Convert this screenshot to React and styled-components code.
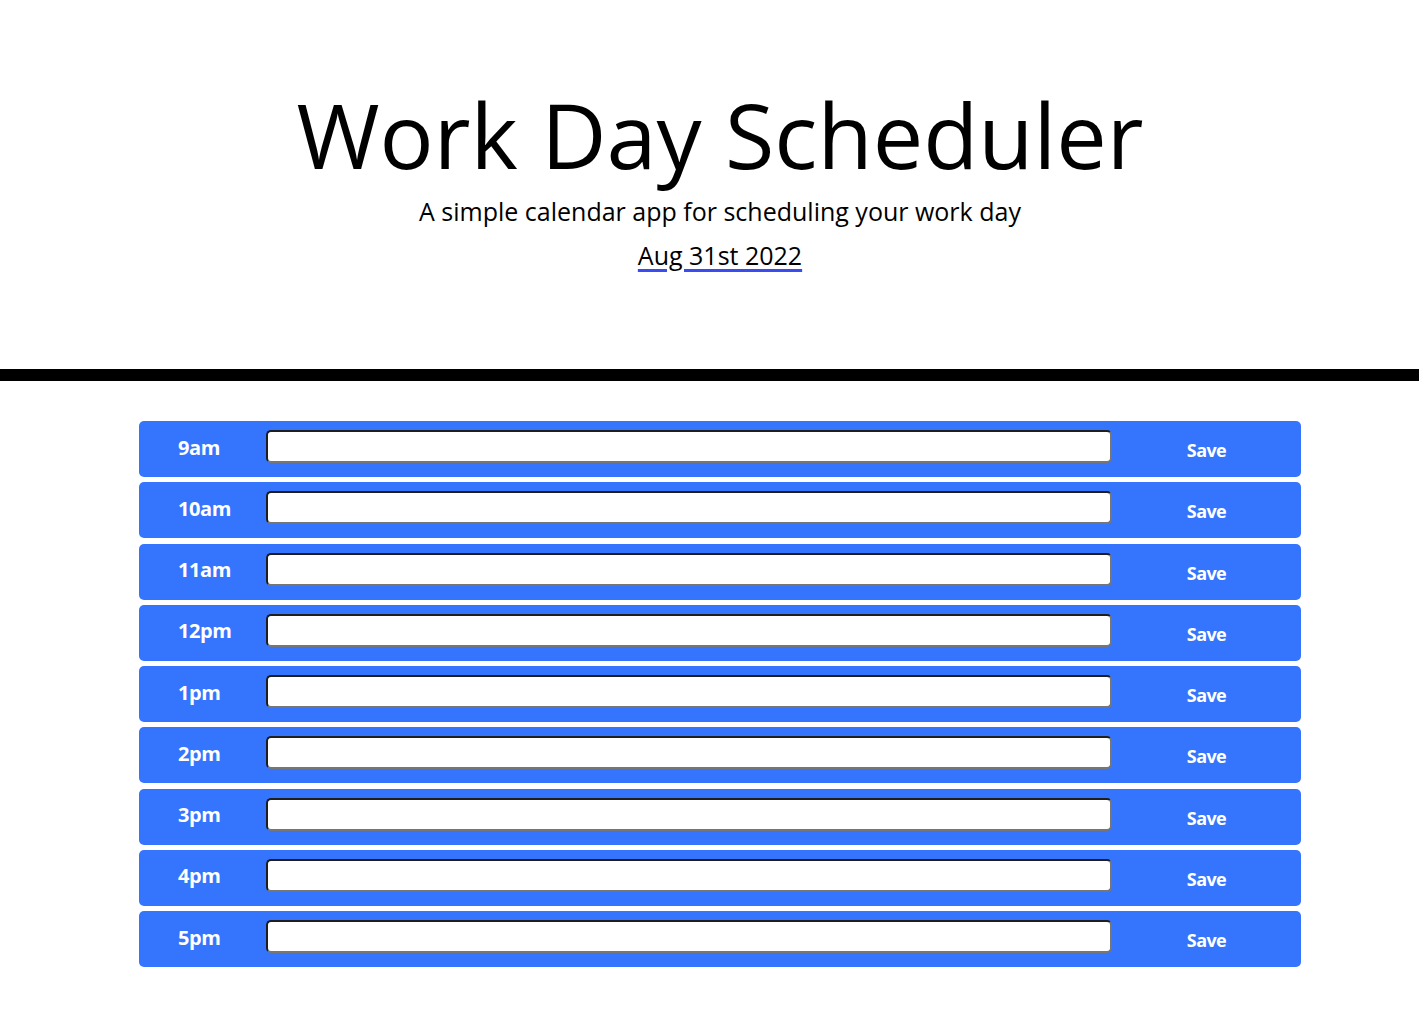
import React from "react";
import styled, { createGlobalStyle } from "styled-components";

const GlobalStyle = createGlobalStyle`
  html, body { margin: 0; padding: 0; background: #ffffff; }
  body { font-family: "Open Sans", "Liberation Sans", sans-serif; color: #000; }
`;

const Header = styled.header`
  padding: 80px 0 96px 21px;
  text-align: center;
  border-bottom: 12px solid #000;
`;

const Title = styled.h1`
  margin: 0;
  font-size: 90px;
  font-weight: 400;
  line-height: 108px;
`;

const Lead = styled.p`
  margin: 5px 0 0;
  font-size: 25px;
  line-height: 36px;
`;

const DateLine = styled.p`
  margin: 8px 0 0;
  font-size: 25px;
  line-height: 36px;
  text-decoration: underline;
  text-decoration-color: #3a4cf0;
  text-decoration-thickness: 2.5px;
  text-underline-offset: 3.5px;
`;

const Schedule = styled.main`
  display: flex;
  flex-direction: column;
  gap: 5.25px;
  width: 1162px;
  margin: 40px 0 0 139px;
`;

const Row = styled.div`
  display: flex;
  align-items: stretch;
  height: 56px;
  background: #3575fe;
  border-radius: 5px;
  color: #fff;
`;

const Hour = styled.div`
  flex: 0 0 127px;
  box-sizing: border-box;
  padding-left: 39px;
  display: flex;
  align-items: center;
  padding-bottom: 4px;
  font-weight: 700;
  font-size: 20px;
  letter-spacing: -0.4px;
`;

const Entry = styled.textarea`
  flex: 1 1 auto;
  min-width: 0;
  margin: 9px 0 0;
  height: 33px;
  box-sizing: border-box;
  resize: none;
  background: #fff;
  border-style: solid;
  border-width: 2px;
  border-color: #1e1e1e #767676 #767676 #1e1e1e;
  border-radius: 5px;
  font-family: "Open Sans", sans-serif;
  font-size: 16px;
  padding: 2px 6px;
`;

const SaveButton = styled.button`
  flex: 0 0 189px;
  background: transparent;
  border: none;
  color: #fff;
  font-family: "Open Sans", sans-serif;
  font-weight: 700;
  font-size: 18px;
  letter-spacing: -0.6px;
  padding: 2px 0 0;
  cursor: pointer;
`;

const hours = ["9am", "10am", "11am", "12pm", "1pm", "2pm", "3pm", "4pm", "5pm"];

export default function App() {
  return (
    <>
      <GlobalStyle />
      <Header>
        <Title>Work Day Scheduler</Title>
        <Lead>A simple calendar app for scheduling your work day</Lead>
        <DateLine>Aug 31st 2022</DateLine>
      </Header>
      <Schedule>
        {hours.map((h) => (
          <Row key={h}>
            <Hour>{h}</Hour>
            <Entry />
            <SaveButton>Save</SaveButton>
          </Row>
        ))}
      </Schedule>
    </>
  );
}
